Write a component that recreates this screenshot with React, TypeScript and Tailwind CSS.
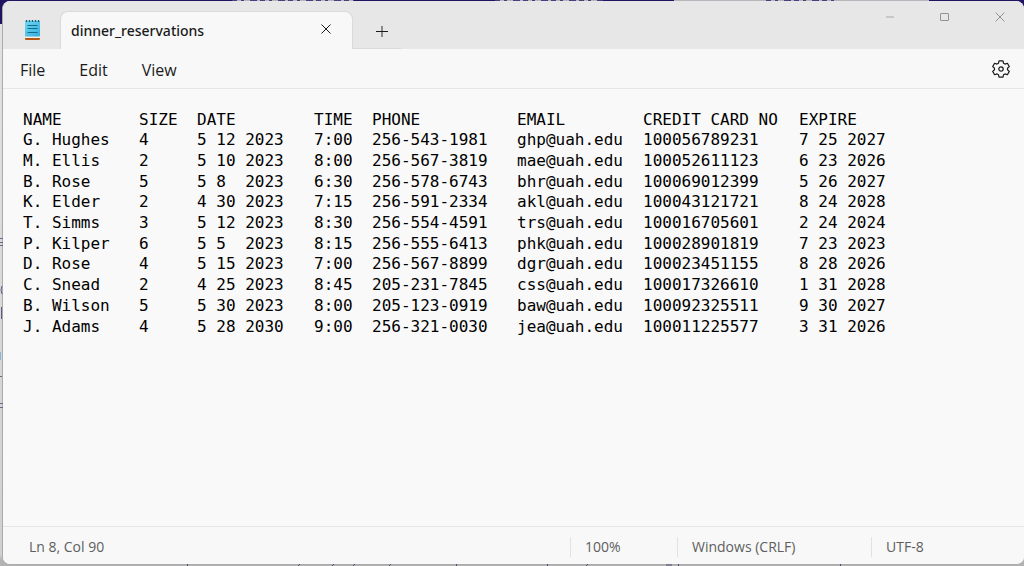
import { useState } from "react";

const columns = ["NAME", "SIZE", "DATE", "TIME", "PHONE", "EMAIL", "CREDIT CARD NO", "EXPIRE"];

const reservations = [
  ["G. Hughes", "4", "5 12 2023", "7:00", "256-543-1981", "ghp@uah.edu", "100056789231", "7 25 2027"],
  ["M. Ellis", "2", "5 10 2023", "8:00", "256-567-3819", "mae@uah.edu", "100052611123", "6 23 2026"],
  ["B. Rose", "5", "5 8  2023", "6:30", "256-578-6743", "bhr@uah.edu", "100069012399", "5 26 2027"],
  ["K. Elder", "2", "4 30 2023", "7:15", "256-591-2334", "akl@uah.edu", "100043121721", "8 24 2028"],
  ["T. Simms", "3", "5 12 2023", "8:30", "256-554-4591", "trs@uah.edu", "100016705601", "2 24 2024"],
  ["P. Kilper", "6", "5 5  2023", "8:15", "256-555-6413", "phk@uah.edu", "100028901819", "7 23 2023"],
  ["D. Rose", "4", "5 15 2023", "7:00", "256-567-8899", "dgr@uah.edu", "100023451155", "8 28 2026"],
  ["C. Snead", "2", "4 25 2023", "8:45", "205-231-7845", "css@uah.edu", "100017326610", "1 31 2028"],
  ["B. Wilson", "5", "5 30 2023", "8:00", "205-123-0919", "baw@uah.edu", "100092325511", "9 30 2027"],
  ["J. Adams", "4", "5 28 2030", "9:00", "256-321-0030", "jea@uah.edu", "100011225577", "3 31 2026"],
];

/* Edges of the page that lies behind the window. */
function Backdrop() {
  return (
    <>
      <svg className="absolute top-0 left-0" width="930" height="460" fill="none" aria-hidden="true">
        <path d="M232 .5h122M495 .5h108M674 .5h255" stroke="#b9b5bd" />
        <path d="M232 .5h122M495 .5h108M766 .5h70" stroke="#4a4080" strokeDasharray="5 4 3 6 7 3" />
        <path d="M0 238.500h3M0 242.500h3M0 245.500h3M0 376.500h2M0 403.500h3M0 407.500h3" stroke="#6b6788" />
        <path d="M2 286q-2 4 0 8M1.500 307v12" stroke="#5d5a86" />
        <path d="M.5 352v8" stroke="#86b6d6" />
      </svg>
      <svg className="absolute bottom-0 left-0" width="860" height="2" fill="none" aria-hidden="true">
        <path d="M187.500 0v2M456.500 0v2M547.500 0v2M678.500 0v2M840.500 0v2M300 0l-2 2M334 0l-2 2M355 0l-2 2M391 0l-2 2M588 0l-2 2M666 1h6" stroke="#555070" />
      </svg>
    </>
  );
}

function NotepadIcon() {
  return (
    <svg width="18" height="22" viewBox="0 0 18 22" aria-hidden="true">
      <defs>
        <linearGradient id="pad" x1="0" y1="0" x2="1" y2="1">
          <stop offset="0" stopColor="#70d8f2" />
          <stop offset="1" stopColor="#35aedb" />
        </linearGradient>
      </defs>
      <path d="M2 18.500h15v1q0 1.500-1 1.500H3q-1 0-1-1.500z" fill="#b85712" />
      <path d="M2 17.500h15v1.500H2z" fill="#f0f0f0" />
      <path d="M2 2h15v14.500q0 1-1 1H3q-1 0-1-1z" fill="url(#pad)" />
      <path d="M4.500 6.500h10M4.500 9.500h10M4.500 13.500h10" stroke="#126b8c" />
      <path d="M3.500 1v2M6.500 1v2M9.500 1v2M12.500 1v2M15.500 1v2" stroke="#17617b" strokeWidth="1.400" />
    </svg>
  );
}

function CrossIcon() {
  return (
    <svg width="10" height="10" viewBox="0 0 10 10" stroke="currentColor" fill="none" aria-hidden="true">
      <path d="M.5.5l9 9M9.5.5l-9 9" />
    </svg>
  );
}

function GearIcon() {
  return (
    <svg width="18" height="18" viewBox="0 0 18 18" fill="none" stroke="currentColor" strokeWidth="1.200" strokeLinejoin="round" aria-hidden="true">
      <path d="M7 .8h4l.5 2.400 1.500.9 2.400-.8 1.900 3.300L15.500 8.200v1.600l1.800 1.600-1.900 3.300-2.400-.8-1.500.9-.5 2.400H7l-.5-2.400-1.500-.9-2.400.8L.7 11.400l1.800-1.600V8.200L.7 6.600l1.900-3.300 2.400.8 1.500-.9z" />
      <circle cx="9" cy="9" r="2.200" />
    </svg>
  );
}

export default function App() {
  const [open, setOpen] = useState(true);
  return (
    <div className="relative flex h-screen flex-col overflow-hidden bg-[linear-gradient(#1f1560_24px,#e2e2e2_24px,#d0d0d0_98%,#b3b3b3_99%)] pt-px pb-px pl-0.5 font-['Open_Sans',sans-serif] text-[#1b1b1b]">
      <Backdrop />
      <div className="flex min-h-0 flex-1 flex-col overflow-hidden rounded-lg border-b border-l border-[#ababab] bg-[#f9f9f9]">
        <header className="flex h-12 shrink-0 bg-[#e7e7e7]">
          <div className="flex w-[57px] items-center justify-center pt-2.5"><NotepadIcon /></div>
          {open && (
            <div className="mt-2.5 flex w-[293px] items-center justify-between rounded-t-lg border border-b-0 border-[#dadada] bg-[#f8f8f8] pr-5 pl-2.5 font-['Noto_Sans',sans-serif] text-sm font-medium">
              <span>dinner_reservations</span>
              <button aria-label="Close tab" className="p-px pb-1" onClick={() => setOpen(false)}><CrossIcon /></button>
            </div>
          )}
          <button aria-label="New tab" className="flex w-12 items-center justify-end border-b border-[#dadada] pt-3 pr-px" onClick={() => setOpen(true)}>
            <svg className="mr-3" width="12" height="12" viewBox="0 0 12 12" stroke="currentColor" aria-hidden="true">
              <path d="M6 1v11" stroke="#8a8a8a" strokeWidth="2" />
              <path d="M0 6.500h12" />
            </svg>
          </button>
          <div className="ml-auto flex h-8 items-center gap-[45px] pr-[19px] text-[#929292]">
            <button aria-label="Minimize"><svg width="10" height="10" viewBox="0 0 10 10" stroke="#c8c8c8" aria-hidden="true"><path d="M1 5h8" strokeWidth="2" /></svg></button>
            <button aria-label="Maximize"><svg width="10" height="10" viewBox="0 0 10 10" fill="none" stroke="currentColor" aria-hidden="true"><rect x=".5" y="1.500" width="8" height="7" rx=".5" /></svg></button>
            <button aria-label="Close window"><CrossIcon /></button>
          </div>
        </header>
        <nav aria-label="Menu bar" className="flex h-10 shrink-0 items-center gap-[34px] border-b border-[#e7e7e7] bg-[#f8f8f8] pt-0.5 pr-3.5 pl-[17px] text-base">
          <button>File</button>
          <button>Edit</button>
          <button>View</button>
          <button aria-label="Settings" className="ml-auto pb-0.5"><GearIcon /></button>
        </nav>
        <main className="min-h-0 flex-1 overflow-auto pt-[21px] pl-5">
          <table className="h-[227px] table-fixed border-collapse text-left font-['DejaVu_Sans_Mono',monospace] text-base leading-5 whitespace-pre text-black">
            <colgroup>
              <col className="w-[116px]" />
              <col className="w-[58px]" />
              <col className="w-[117px]" />
              <col className="w-[58px]" />
              <col className="w-[145px]" />
              <col className="w-[126px]" />
              <col className="w-[156px]" />
              <col className="w-[90px]" />
            </colgroup>
            <thead>
              <tr>{columns.map((c) => <th key={c} className="p-0 font-normal">{c}</th>)}</tr>
            </thead>
            <tbody>
              {reservations.map((row) => (
                <tr key={row[0]}>{row.map((cell, i) => <td key={columns[i]} className="p-0">{cell}</td>)}</tr>
              ))}
            </tbody>
          </table>
        </main>
        <footer className="flex h-[38px] shrink-0 items-center border-t border-[#e7e7e7] bg-[#f8f8f8] pt-[3px] pl-[26px] text-sm text-[#5e5e5e]">
          <span className="mr-auto">Ln 8, Col 90</span>
          <span className="w-[107px] border-l border-[#e2e2e2] pl-3.5">100%</span>
          <span className="w-[194px] border-l border-[#e2e2e2] pl-3.5">Windows (CRLF)</span>
          <span className="w-[153px] border-l border-[#e2e2e2] pl-3.5">UTF-8</span>
        </footer>
      </div>
    </div>
  );
}
